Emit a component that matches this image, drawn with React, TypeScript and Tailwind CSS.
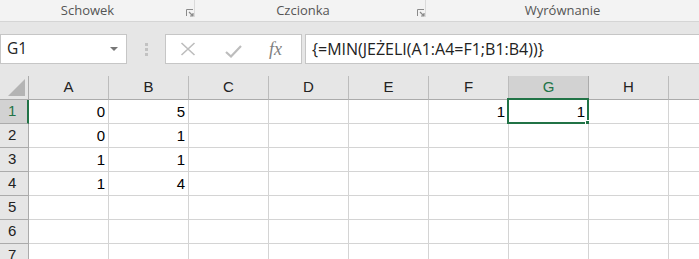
import React from "react";

const COLS = ["A", "B", "C", "D", "E", "F", "G", "H", ""];
const DATA: Record<number, Record<string, string>> = {
  1: { A: "0", B: "5", F: "1", G: "1" },
  2: { A: "0", B: "1" },
  3: { A: "1", B: "1" },
  4: { A: "1", B: "4" },
};

function Launcher() {
  return (
    <svg width="8" height="8" viewBox="0 0 8 8" className="shrink-0">
      <path d="M0.5 7V0.5H7" stroke="#8a8a8a" strokeWidth="1" fill="none" />
      <path d="M3 3L7 7M7 4V7H4" stroke="#8a8a8a" strokeWidth="1.2" fill="none" />
    </svg>
  );
}

export default function App() {
  const font = { fontFamily: '"Open Sans", "Noto Sans", sans-serif' };
  return (
    <div className="w-[699px] h-[259px] overflow-hidden bg-[#e6e6e6] relative" style={font}>
      {/* Ribbon group labels */}
      <div className="h-[22px] bg-[#f3f3f3] border-b border-[#d5d5d5] flex text-[13px] text-[#555]">
        <div className="w-[200px] flex items-start border-r border-[#dadada] h-[17px]">
          <div className="w-[175px] text-center leading-[21px] h-[21px]">Schowek</div>
          <div className="pt-[9px] pl-[11px]"><Launcher /></div>
        </div>
        <div className="w-[235px] flex items-start border-r border-[#dadada] h-[17px]">
          <div className="w-[216px] text-center leading-[21px] h-[21px]">Czcionka</div>
          <div className="pt-[9px] pl-[6px]"><Launcher /></div>
        </div>
        <div className="w-[290px] text-center leading-[21px]">Wyrównanie</div>
      </div>

      {/* Formula bar */}
      <div className="mt-[12px] h-[30px] flex items-stretch">
        <div className="w-[127px] bg-white border border-[#c6c6c6] flex items-center justify-between pl-[6px] pr-[8px]">
          <span className="text-[15.5px] text-[#222]">G1</span>
          <svg width="8" height="4" viewBox="0 0 8 4"><path d="M0 0H8L4 4Z" fill="#777" /></svg>
        </div>
        <div className="w-[38px] flex flex-col items-center justify-center gap-[2px]">
          <div className="w-[3px] h-[3px] bg-[#c2c2c2]" />
          <div className="w-[3px] h-[3px] bg-[#c2c2c2]" />
          <div className="w-[3px] h-[3px] bg-[#c2c2c2]" />
        </div>
        <div className="w-[137px] bg-white border border-[#c6c6c6] flex items-center">
          <svg width="16" height="14" viewBox="0 0 16 14" className="ml-[14px]">
            <path d="M1.5 1L14.5 13M14.5 1L1.5 13" stroke="#bdbdbd" strokeWidth="1.6" fill="none" />
          </svg>
          <svg width="17" height="13" viewBox="0 0 17 13" className="ml-[29px] mt-[4px]">
            <path d="M1 7L6 11.5L16 1" stroke="#bdbdbd" strokeWidth="2.2" fill="none" />
          </svg>
          <span
            className="ml-[27px] text-[18px] italic text-[#7f7f7f] leading-none"
            style={{ fontFamily: '"Liberation Serif", serif' }}
          >
            fx
          </span>
        </div>
        <div className="ml-[3px] flex-1 bg-white border border-[#c6c6c6] border-r-0 flex items-center pl-[6px]">
          <span className="text-[16px] text-[#222] whitespace-nowrap">{"{=MIN(JEŻELI(A1:A4=F1;B1:B4))}"}</span>
        </div>
      </div>

      {/* Grid */}
      <div className="mt-[12px]" style={{ fontFamily: '"Liberation Sans", Arial, sans-serif' }}>
        <div className="flex h-[24px]">
          <div className="w-[29px] shrink-0 h-[24px] border-r border-b border-[#ababab] bg-[#e6e6e6] relative">
            <svg width="17" height="17" viewBox="0 0 17 17" className="absolute left-[8px] top-[3px]">
              <path d="M17 0V17H0Z" fill="#b4b4b4" />
            </svg>
          </div>
          {COLS.map((c, i) => (
            <div
              key={i}
              className={
                c === "G"
                  ? "w-[80px] shrink-0 h-[24px] border-r border-[#ababab] border-b-2 border-b-[#217346] bg-[#d2d2d2] text-[#217346] text-[15px] flex items-center justify-center"
                  : "w-[80px] shrink-0 h-[24px] border-r border-b border-[#bcbcbc] border-b-[#ababab] bg-[#e6e6e6] text-[#222] text-[15px] flex items-center justify-center"
              }
            >
              {c}
            </div>
          ))}
        </div>
        {[1, 2, 3, 4, 5, 6, 7].map((r) => (
          <div key={r} className="flex h-[24px]">
            <div
              className={
                r === 1
                  ? "w-[29px] shrink-0 h-[24px] border-r-2 border-[#217346] border-b border-b-[#ababab] bg-[#d2d2d2] text-[#217346] text-[15px] flex items-center pl-[8px]"
                  : "w-[29px] shrink-0 h-[24px] border-r border-b border-[#ababab] bg-[#e6e6e6] text-[#222] text-[15px] flex items-center pl-[8px]"
              }
            >
              {r}
            </div>
            {COLS.map((c, i) => (
              <div
                key={i}
                className="w-[80px] shrink-0 h-[24px] border-r border-b border-[#d4d4d4] bg-white relative flex items-center justify-end pr-[3px] pt-[2px] text-[15px] text-black"
              >
                {DATA[r]?.[c] ?? ""}
                {r === 1 && c === "G" && (
                  <>
                    <div className="absolute -left-[2px] -top-[2px] w-[82px] h-[26px] border-2 border-[#217346]" />
                    <div className="absolute -right-[3px] -bottom-[3px] w-[6px] h-[6px] bg-[#217346] border border-white" />
                  </>
                )}
              </div>
            ))}
          </div>
        ))}
      </div>
    </div>
  );
}
